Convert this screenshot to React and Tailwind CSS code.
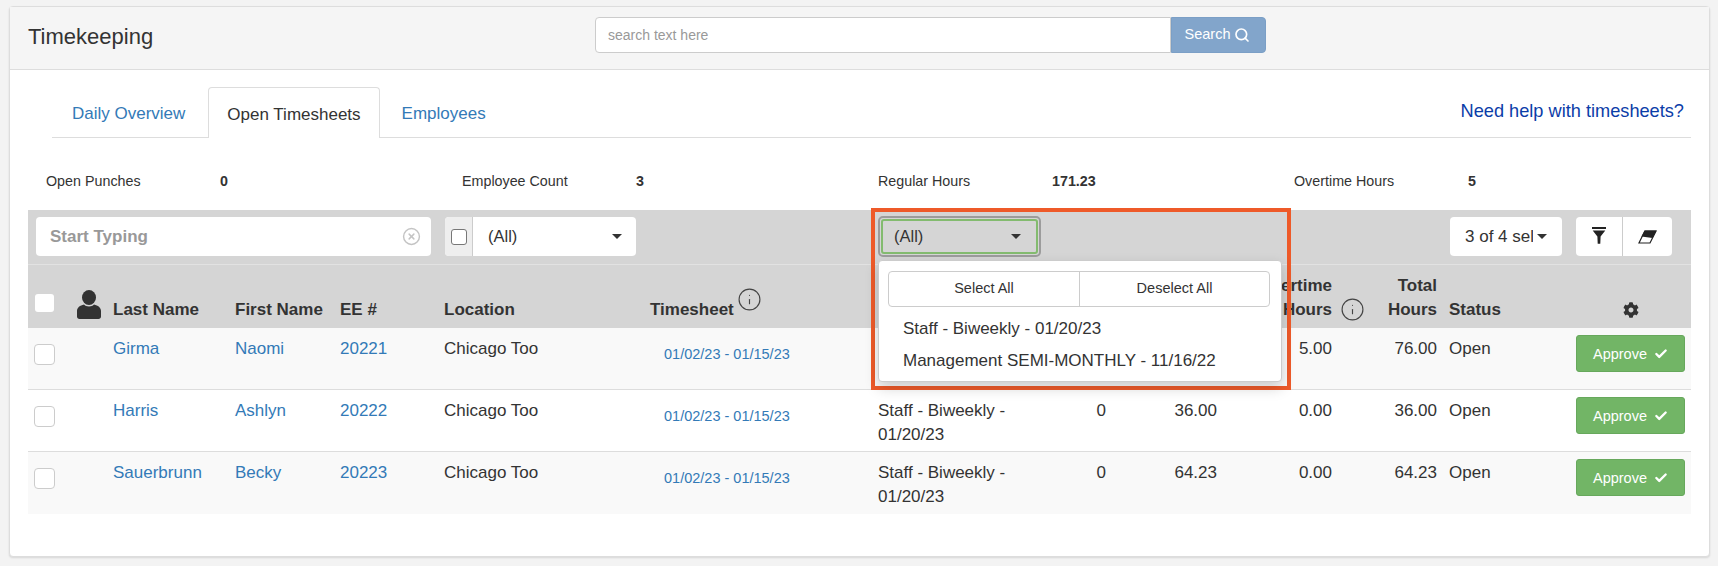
import { Search, CircleX, Info, Check } from "lucide-react";
import { FaCog } from "react-icons/fa";

const COLS = "grid grid-cols-[85px_122px_105px_104px_206px_228px_178px_50px_111px_115px_105px_139px_115px]";

const rows = [
  { last: "Girma", first: "Naomi", ee: "20221", regular: "71.00", overtime: "5.00", total: "76.00" },
  { last: "Harris", first: "Ashlyn", ee: "20222", regular: "36.00", overtime: "0.00", total: "36.00" },
  { last: "Sauerbrunn", first: "Becky", ee: "20223", regular: "64.23", overtime: "0.00", total: "64.23" },
];

const stats = [
  { label: "Open Punches", value: "0" },
  { label: "Employee Count", value: "3" },
  { label: "Regular Hours", value: "171.23" },
  { label: "Overtime Hours", value: "5" },
];

const Caret = () => (
  <span className="h-0 w-0 border-x-[5px] border-t-[5px] border-x-transparent border-t-[#333]" />
);

const PersonIcon = () => (
  <svg width="24" height="29" viewBox="0 0 24 29" fill="#333">
    <ellipse cx="12" cy="7.5" rx="7" ry="7.5" />
    <path d="M7 14.5 C8.5 17 15.5 17 17 14.5 C21 15.5 24 17.5 24 21 L24 26.5 C24 28 23 29 21.5 29 L2.5 29 C1 29 0 28 0 26.5 L0 21 C0 17.5 3 15.5 7 14.5 Z" />
  </svg>
);

const FilterIcon = () => (
  <svg width="14" height="17" viewBox="0 0 14 17" fill="#222">
    <rect x="0" y="0" width="14" height="2" />
    <path d="M0.7 3.4 H13.3 L8.6 9.6 L8.3 16.8 H5.7 L5.4 9.6 Z" />
  </svg>
);

const EraserIcon = () => (
  <svg width="19" height="14" viewBox="0 0 19 14">
    <path d="M6.8 1 H18 L12 13 H1 Z" fill="none" stroke="#222" strokeWidth="1.2" />
    <path d="M6.8 0.6 H18.6 L14.6 8 L3.4 6.4 Z" fill="#222" />
  </svg>
);

const RowCheckbox = () => (
  <span className="block h-[21px] w-[21px] rounded-[4px] border border-[#ccc] bg-white" />
);

const GroupDropdown = () => (
  <div className="relative -mt-px ml-[242px] h-[41px] w-[163px] rounded-[5px] border-2 border-[#9c9c9c] p-px">
    <div className="flex h-[35px] items-center justify-between rounded-[3px] border-2 border-[#83bb6f] pl-[11px] pr-[15px] text-[16.5px] text-[#333]">
      <span>(All)</span>
      <Caret />
    </div>

    <div className="absolute left-[-9px] top-[-10px] z-10 h-[182px] w-[420px] border-[4px] border-[#ee5a29]" />

    <div className="absolute left-[-2px] top-[42px] z-20 h-[122px] w-[404px] rounded-[4px] border border-[#ccc] bg-white px-[9px] pt-[10px] shadow-[0_6px_14px_rgba(0,0,0,0.18)]">
      <div className="flex h-[36px] w-[382px] rounded-[4px] border border-[#ccc] text-[14.5px] text-[#333]">
        <div className="flex w-[191px] items-center justify-center border-r border-[#ccc]">Select All</div>
        <div className="flex flex-1 items-center justify-center">Deselect All</div>
      </div>
      <div className="mt-[6px] pl-[15px] text-[17px] leading-[32px] text-[#333]">
        <div>Staff - Biweekly - 01/20/23</div>
        <div className="whitespace-nowrap">Management SEMI-MONTHLY - 11/16/22</div>
      </div>
    </div>
  </div>
);

const Toolbar = () => (
  <div className="flex h-[55px] items-start border-b border-[#e2e2e2] bg-[#d5d5d5] pl-[8px] pr-[19px] pt-[7px]">
    <div className="flex h-[39px] w-[395px] items-center justify-between rounded-[4px] bg-white pl-[14px] pr-[10px] text-[17px] font-bold text-[#999]">
      <span>Start Typing</span>
      <CircleX size={19} strokeWidth={1.8} color="#c4c4c4" />
    </div>

    <div className="ml-[14px] flex h-[39px] w-[191px] overflow-hidden rounded-[4px] bg-white">
      <div className="flex w-[28px] items-center justify-center border-r border-[#ccc] bg-[#eee]">
        <span className="block h-[16px] w-[16px] rounded-[3px] border border-[#777] bg-white" />
      </div>
      <div className="flex flex-1 items-center justify-between pl-[15px] pr-[14px] text-[16.5px] text-[#333]">
        <span>(All)</span>
        <Caret />
      </div>
    </div>

    <GroupDropdown />

    <div className="ml-auto flex h-[39px] w-[112px] items-center gap-[4px] rounded-[4px] bg-white pl-[15px] text-[17px] text-[#333]">
      <span className="w-[68px] overflow-hidden whitespace-nowrap">3 of 4 sel</span>
      <Caret />
    </div>

    <div className="ml-[14px] flex h-[39px] w-[96px] rounded-[4px] bg-white">
      <div className="flex w-[47px] items-center justify-center border-r border-[#ccc] pb-[2px]">
        <FilterIcon />
      </div>
      <div className="flex flex-1 items-center justify-center">
        <EraserIcon />
      </div>
    </div>
  </div>
);

const HeaderRow = () => (
  <div className={`${COLS} h-[63px] items-end bg-[#d5d5d5] pb-[6px] text-[17px] font-bold leading-[24px] text-[#333]`}>
    <div className="-mb-px flex h-[56px] items-start gap-[23px] pl-[7px] pt-[23px]">
      <span className="mt-[4px] block h-[18px] w-[19px] rounded-[3px] bg-white" />
      <PersonIcon />
    </div>
    <div>Last Name</div>
    <div>First Name</div>
    <div>EE #</div>
    <div>Location</div>
    <div className="flex items-start gap-[3px]">
      <span className="whitespace-nowrap">Timesheet</span>
      <Info size={25} strokeWidth={1.1} color="#444" className="-mt-[11px]" />
    </div>
    <div />
    <div />
    <div />
    <div className="relative text-right">
      Overtime
      <br />
      Hours
      <Info size={25} strokeWidth={1.1} color="#444" className="absolute bottom-0 right-[-33px]" />
    </div>
    <div className="text-right">
      Total
      <br />
      Hours
    </div>
    <div className="pl-[12px]">Status</div>
    <div className="flex justify-center pb-[4px] pr-[6px]">
      <FaCog size={16} color="#333" />
    </div>
  </div>
);

const Row = ({ row, striped }) => (
  <div className={`${COLS} h-[62px] border-b border-[#ddd] pt-[9px] text-[17px] leading-[24px] text-[#333] last:border-b-0 ${striped ? "bg-[#f9f9f9]" : "bg-white"}`}>
    <div className="pl-[6px] pt-[7px]">
      <RowCheckbox />
    </div>
    <a className="text-[#337ab7]">{row.last}</a>
    <a className="text-[#337ab7]">{row.first}</a>
    <a className="text-[#337ab7]">{row.ee}</a>
    <div>Chicago Too</div>
    <a className="pl-[14px] pt-[5px] text-[14.5px] text-[#337ab7]">01/02/23 - 01/15/23</a>
    <div className="whitespace-nowrap">
      Staff - Biweekly -
      <br />
      01/20/23
    </div>
    <div className="text-right">0</div>
    <div className="text-right">{row.regular}</div>
    <div className="text-right">{row.overtime}</div>
    <div className="text-right">{row.total}</div>
    <div className="pl-[12px]">Open</div>
    <div>
      <button className="-mt-[2px] flex h-[37px] w-[109px] items-center justify-center gap-[7px] rounded-[3px] border border-[#67a85c] bg-[#72b566] text-[14.5px] text-white">
        Approve
        <Check size={14} strokeWidth={4} />
      </button>
    </div>
  </div>
);

const App = () => {
  return (
    <div className="h-[566px] bg-[#f3f3f3] pb-[9px] pl-[9px] pr-[8px] pt-[6px] font-['Liberation_Sans',Arial,sans-serif]">
      <div className="flex h-full flex-col rounded-[4px] border border-[#ddd] bg-white shadow-[0_1px_2px_rgba(0,0,0,0.12)]">
        <div className="flex h-[63px] shrink-0 items-start border-b border-[#ddd] bg-[#f5f5f5] pl-[18px] pt-[10px]">
          <h1 className="w-[567px] pt-[5px] text-[22px] leading-[30px] text-[#333]">Timekeeping</h1>
          <div className="flex h-[36px] w-[671px]">
            <div className="flex flex-1 items-center rounded-l-[4px] border border-[#ccc] bg-white pl-[12px] text-[14px] text-[#999]">
              search text here
            </div>
            <button className="flex w-[95px] items-center justify-center gap-[4px] rounded-r-[4px] border border-[#7b9fc6] bg-[#82a5cb] pr-[2px] text-[14.5px] text-white">
              Search
              <Search size={16} strokeWidth={2.5} />
            </button>
          </div>
        </div>

        <div className="pl-[18px] pr-[18px]">
          <div className="ml-[24px] mt-[17px] flex h-[51px] items-stretch justify-between border-b border-[#ddd] text-[17px] leading-[24px]">
            <div className="flex">
              <a className="flex items-center pl-[20px] pr-[23px] pt-[4px] text-[#337ab7]">Daily Overview</a>
              <a className="-mb-px flex items-center rounded-t-[4px] border border-b-0 border-[#ddd] bg-white px-[18px] pt-[4px] text-[#333]">Open Timesheets</a>
              <a className="flex items-center px-[22px] pt-[4px] text-[#337ab7]">Employees</a>
            </div>
            <a className="pr-[7px] pt-[12px] text-[18.2px] text-[#0b3da8]">Need help with timesheets?</a>
          </div>

          <div className="grid h-[72px] grid-cols-[416px_416px_416px_1fr] items-center pl-[18px] pt-[16px] text-[14.3px] text-[#333]">
            {stats.map((s) => (
              <div key={s.label} className="flex">
                <span className="w-[174px]">{s.label}</span>
                <span className="font-bold">{s.value}</span>
              </div>
            ))}
          </div>

          <Toolbar />
          <HeaderRow />
          {rows.map((row, i) => (
            <Row key={row.ee} row={row} striped={i % 2 === 0} />
          ))}
        </div>
      </div>
    </div>
  );
};

export default App;
